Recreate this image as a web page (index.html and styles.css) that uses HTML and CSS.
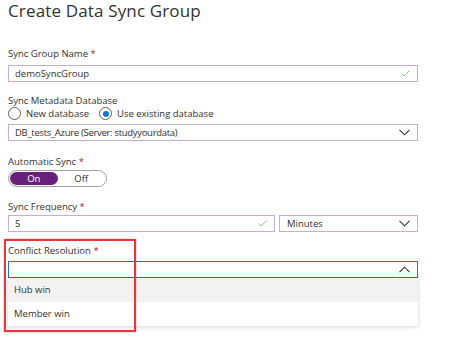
FILE: index.html
```html
<!DOCTYPE html>
<html lang="en">

<head>
    <meta charset="UTF-8">
    <meta name="viewport" content="width=device-width, initial-scale=1.0">
    <title>Create Data Sync Group</title>
    <link rel="stylesheet" href="styles.css">
</head>

<body>
    <div id="form">
        <h1>Create Data Sync Group</h1>

        <div class="field f-name">
            <label>Sync Group Name <span class="req">*</span></label>
            <div class="box">
                <span class="val">demoSyncGroup</span>
                <svg class="check" width="9" height="7" viewBox="0 0 9 7"><path d="M0.5 3.5 L3 6 L8.5 0.5" fill="none" stroke="#8cc48c" stroke-width="1"/></svg>
            </div>
        </div>

        <div class="field f-meta">
            <label>Sync Metadata Database</label>
            <div class="radios">
                <span class="radio"></span><span class="rtext">New database</span>
                <span class="radio on"></span><span class="rtext">Use existing database</span>
            </div>
            <div class="box">
                <span class="val tight">DB_tests_Azure (Server: studyyourdata)</span>
                <svg class="chev" width="11" height="7" viewBox="0 0 11 7"><path d="M0.5 0.8 L5.5 5.8 L10.5 0.8" fill="none" stroke="#323130" stroke-width="1.1"/></svg>
            </div>
        </div>

        <div class="field f-auto">
            <label>Automatic Sync <span class="req">*</span></label>
            <div class="toggle">
                <span class="opt sel">On</span>
                <span class="opt">Off</span>
            </div>
        </div>

        <div class="field f-freq">
            <label>Sync Frequency <span class="req">*</span></label>
            <div class="pair">
                <div class="box num">
                    <span class="val">5</span>
                    <svg class="check" width="9" height="7" viewBox="0 0 9 7"><path d="M0.5 3.5 L3 6 L8.5 0.5" fill="none" stroke="#8cc48c" stroke-width="1"/></svg>
                </div>
                <div class="box unit">
                    <span class="val">Minutes</span>
                    <svg class="chev" width="11" height="7" viewBox="0 0 11 7"><path d="M0.5 0.8 L5.5 5.8 L10.5 0.8" fill="none" stroke="#323130" stroke-width="1.1"/></svg>
                </div>
            </div>
        </div>

        <div class="field f-conflict">
            <div class="mark"></div>
            <label>Conflict Resolution <span class="req">*</span></label>
            <div class="box open">
                <span class="val"></span>
                <svg class="chev" width="11" height="7" viewBox="0 0 11 7"><path d="M0.5 6.2 L5.5 1.2 L10.5 6.2" fill="none" stroke="#323130" stroke-width="1.1"/></svg>
            </div>
            <ul class="menu">
                <li class="hover">Hub win</li>
                <li>Member win</li>
            </ul>
        </div>
    </div>
</body>

</html>
```

FILE: styles.css
```css
html,
body {
    height: 100%;
}

body {
    margin: 0;
    padding: 0 8px;
    font-family: "Open Sans", "Noto Sans", sans-serif;
    color: #323130;
    background: white;
    min-height: 339px;
}

#form {
    width: 410px;
}

h1 {
    margin: 0;
    font-size: 17px;
    font-weight: 400;
    line-height: 22px;
    height: 22px;
    letter-spacing: 0.15px;
}

.field label {
    display: block;
    font-size: 9.5px;
    line-height: 14px;
    height: 14px;
}

.req {
    color: #a4262c;
}

.box {
    box-sizing: border-box;
    height: 17px;
    border: 1px solid #c5aed2;
    display: flex;
    align-items: center;
    padding: 0 7px 0 6px;
    font-size: 9.5px;
}

.val {
    flex: 1;
}

.tight {
    letter-spacing: -0.3px;
}

.f-name {
    margin-top: 25px;
}

.f-name .box {
    margin-top: 4px;
}

.f-meta {
    margin-top: 12px;
}

.radios {
    display: flex;
    align-items: center;
    height: 13px;
    margin-top: -1px;
    font-size: 9.5px;
}

.radio {
    box-sizing: border-box;
    width: 13px;
    height: 13px;
    border: 1px solid #605e5c;
    border-radius: 50%;
    margin-right: 5px;
    display: flex;
    align-items: center;
    justify-content: center;
}

.radio.on::after {
    content: "";
    width: 6px;
    height: 6px;
    border-radius: 50%;
    background: #0078d4;
}

.rtext {
    margin-right: 10px;
}

.f-meta .box {
    margin-top: 4px;
}

.f-auto {
    margin-top: 14px;
}

.toggle {
    box-sizing: border-box;
    margin-top: 1px;
    width: 99px;
    height: 17px;
    border: 1px solid #a19f9d;
    border-radius: 9px;
    display: flex;
    align-items: center;
    padding: 1px;
    font-size: 9.5px;
}

.opt {
    width: 48px;
    height: 13px;
    line-height: 13px;
    text-align: center;
    border-radius: 7px;
}

.opt.sel {
    background: #68217a;
    color: white;
}

.f-freq {
    margin-top: 13px;
}

.pair {
    display: flex;
    gap: 4px;
    margin-top: 1px;
}

.num {
    width: 267px;
}

.unit {
    flex: 1;
    padding-left: 7px;
}

.f-conflict {
    position: relative;
    margin-top: 12px;
}

.f-conflict .box {
    margin-top: 3px;
    border: 1.5px solid #1c76c9;
}

.menu {
    list-style: none;
    margin: 0;
    padding: 0;
    box-shadow: 0 1px 4px rgba(0, 0, 0, 0.18);
    font-size: 9.5px;
}

.menu li {
    height: 24px;
    line-height: 24px;
    padding-left: 6px;
}

.menu li.hover {
    background: #f3f2f1;
}

.mark {
    position: absolute;
    left: -4px;
    top: -5px;
    width: 132px;
    height: 93px;
    box-sizing: border-box;
    border: 2px solid #e0393e;
    box-shadow: 0 0 2px rgba(224, 57, 62, 0.5);
    z-index: 2;
}
```
